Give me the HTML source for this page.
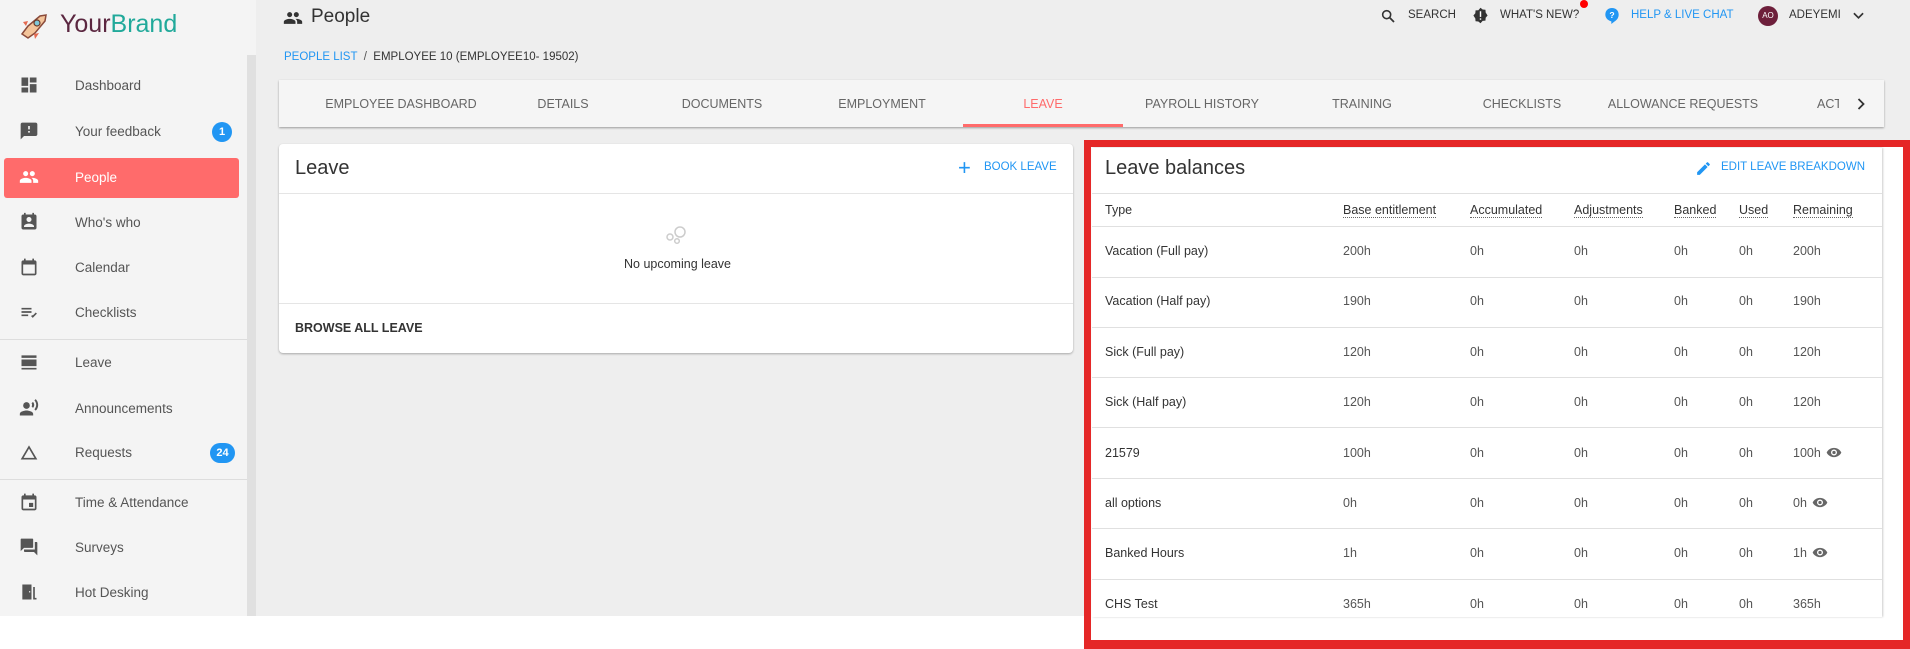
<!DOCTYPE html>
<html><head><meta charset="utf-8"><style>
*{margin:0;padding:0;box-sizing:border-box}
body{width:1910px;height:649px;background:#fff;font-family:"Liberation Sans",sans-serif;position:relative;overflow:hidden;color:#333}
.a{position:absolute;white-space:nowrap}
#side{position:absolute;left:0;top:0;width:247px;height:616px;background:#f4f4f4}
#scroll{position:absolute;left:247px;top:55px;width:9px;height:561px;background:#e0e0e0}
#scrolltop{position:absolute;left:247px;top:0;width:9px;height:55px;background:#f4f4f4}
#main{position:absolute;left:256px;top:0;width:1654px;height:616px;background:#eeeeee}
.ni{position:absolute;left:0;width:247px;height:40px}
.ni svg{position:absolute;left:19px;top:9px}
.ni span{position:absolute;left:75px;top:12px;font-size:13.5px;color:#555}
.badge{position:absolute;left:211px;top:10px;width:22px;height:20px;border-radius:10px;background:#2196f3;color:#fff;font-size:11px;font-weight:bold;text-align:center;line-height:20px}
.hr{position:absolute;left:0;width:247px;height:1px;background:#ddd}
.tab{position:absolute;top:97px;font-size:12.5px;color:#666;transform:translateX(-50%)}
.card{position:absolute;background:#fff;border-radius:4px;box-shadow:0 1px 2px rgba(0,0,0,.3)}
.th{position:absolute;top:203px;font-size:12.5px;color:#333;border-bottom:1px dotted #666;line-height:14px}
.td{position:absolute;font-size:12.5px;color:#555}
.rl{position:absolute;left:1092px;width:790px;height:1px;background:#e0e0e0}
</style></head><body>
<div id="side"></div><div id="scrolltop"></div><div id="scroll"></div><div id="main"></div>

<svg class="a" style="left:18px;top:12px" width="32" height="28" viewBox="0 0 32 28"><path d="M4 22 L10 14 L22 4 L28 3 L27 9 L17 21 L10 26Z" fill="#f3c49a" stroke="#8a4a3a" stroke-width="1.5"/><circle cx="19" cy="11" r="3" fill="#7fc8d8" stroke="#6a3a2a" stroke-width="1.2"/><path d="M5 10 L10 9 L8 14Z M16 22 L17 27 L21 21Z" fill="#e46a50"/></svg>
<div class="a" style="left:60px;top:10px;font-size:25px;color:#5b2740">Your<span style="color:#21a99a">Brand</span></div>

<div class="ni" style="top:66px"><svg width="20" height="20" viewBox="0 0 24 24"><path d="M3 13h8V3H3v10zm0 8h8v-6H3v6zm10 0h8V11h-8v10zm0-18v6h8V3h-8z" fill="#555"/></svg><span>Dashboard</span></div>
<div class="ni" style="top:112px"><svg width="20" height="20" viewBox="0 0 24 24"><path d="M20 2H4c-1.1 0-2 .9-2 2v18l4-4h14c1.1 0 2-.9 2-2V4c0-1.1-.9-2-2-2zm-7 12h-2v-2h2v2zm0-4h-2V6h2v4z" fill="#555"/></svg><span>Your feedback</span><div class="badge" style="left:212px;width:20px">1</div></div>
<div class="a" style="left:4px;top:158px;width:235px;height:40px;background:#ff6b6b;border-radius:3px"></div>
<div class="ni" style="top:158px"><svg width="20" height="20" viewBox="0 0 24 24"><path d="M16 11c1.66 0 2.99-1.34 2.99-3S17.66 5 16 5s-3 1.34-3 3 1.34 3 3 3zm-8 0c1.66 0 2.99-1.34 2.99-3S9.66 5 8 5 5 6.34 5 8s1.34 3 3 3zm0 2c-2.33 0-7 1.17-7 3.5V19h14v-2.5c0-2.330-4.67-3.5-7-3.5zm8 0c-.29 0-.62.02-.97.05 1.16.84 1.97 1.97 1.97 3.45V19h6v-2.5c0-2.33-4.67-3.5-7-3.5z" fill="#fff"/></svg><span style="color:#fff">People</span></div>
<div class="ni" style="top:203px"><svg width="20" height="20" viewBox="0 0 24 24"><path d="M19 3h-1V1h-2v2H8V1H6v2H5c-1.1 0-2 .9-2 2v14c0 1.1.9 2 2 2h14c1.1 0 2-.9 2-2V5c0-1.1-.9-2-2-2zm-7 3c1.66 0 3 1.34 3 3s-1.34 3-3 3-3-1.34-3-3 1.34-3 3-3zm6 12H6v-1c0-2 4-3.1 6-3.1s6 1.1 6 3.1v1z" fill="#555"/></svg><span>Who's who</span></div>
<div class="ni" style="top:248px"><svg width="20" height="20" viewBox="0 0 24 24"><path d="M19 4h-1V2h-2v2H8V2H6v2H5c-1.1 0-2 .9-2 2v14c0 1.1.9 2 2 2h14c1.1 0 2-.9 2-2V6c0-1.1-.9-2-2-2zm0 16H5V9h14v11z" fill="#555"/></svg><span>Calendar</span></div>
<div class="ni" style="top:293px"><svg width="20" height="20" viewBox="0 0 24 24"><path d="M3 7h12v2H3zm0 4h12v2H3zm0 4h8v2H3zm11.5 2l2 2 5-5-1.4-1.4-3.6 3.6-.6-.6z" fill="#555"/></svg><span>Checklists</span></div>
<div class="hr" style="top:339px"></div>
<div class="ni" style="top:343px"><svg width="20" height="20" viewBox="0 0 24 24"><path d="M3 4h18v3H3zm0 5h18v8H3zm0 10h18v2H3z" fill="#555"/></svg><span>Leave</span></div>
<div class="ni" style="top:389px"><svg width="20" height="20" viewBox="0 0 24 24"><circle cx="9" cy="9" r="4" fill="#555"/><path d="M9 15c-2.7 0-8 1.3-8 4v2h16v-2c0-2.7-5.3-4-8-4zm7.8-10.4l-1.7 1.7c.8 1.2.8 2.6 0 3.8l1.7 1.7c2-2 2-5 0-7.2zM20.1 1.3l-1.6 1.6c2.8 3 2.8 7.5 0 10.7l1.6 1.6c3.9-3.8 3.9-9.8 0-13.9z" fill="#555"/></svg><span>Announcements</span></div>
<div class="ni" style="top:433px"><svg width="20" height="20" viewBox="0 0 24 24"><path d="M12 4L2 21h20L12 4zm0 3.9L18.5 19h-13L12 7.9z" fill="#555"/></svg><span>Requests</span><div class="badge" style="left:210px;width:25px">24</div></div>
<div class="hr" style="top:479px"></div>
<div class="ni" style="top:483px"><svg width="20" height="20" viewBox="0 0 24 24"><path d="M19 4h-1V2h-2v2H8V2H6v2H5c-1.1 0-2 .9-2 2v14c0 1.1.9 2 2 2h14c1.1 0 2-.9 2-2V6c0-1.1-.9-2-2-2zm0 16H5V9h14v11zm-7-7h5v5h-5z" fill="#555"/></svg><span>Time &amp; Attendance</span></div>
<div class="ni" style="top:528px"><svg width="20" height="20" viewBox="0 0 24 24"><path d="M21 6h-2v9H6v2c0 .6.4 1 1 1h11l4 4V7c0-.6-.4-1-1-1zm-4 6V3c0-.6-.4-1-1-1H3c-.6 0-1 .4-1 1v14l4-4h10c.6 0 1-.4 1-1z" fill="#555"/></svg><span>Surveys</span></div>
<div class="ni" style="top:573px"><svg width="20" height="20" viewBox="0 0 24 24"><path d="M4 3h11v18H4zm13 3h2v13h2v2h-4z" fill="#555"/><rect x="12" y="11" width="1.5" height="1.5" fill="#f4f4f4"/></svg><span>Hot Desking</span></div>

<svg class="a" style="left:283px;top:8px" width="20" height="20" viewBox="0 0 24 24"><path d="M16 11c1.66 0 2.99-1.34 2.99-3S17.66 5 16 5s-3 1.34-3 3 1.34 3 3 3zm-8 0c1.66 0 2.99-1.34 2.99-3S9.66 5 8 5 5 6.34 5 8s1.34 3 3 3zm0 2c-2.33 0-7 1.17-7 3.5V19h14v-2.5c0-2.33-4.67-3.5-7-3.5zm8 0c-.29 0-.62.02-.97.05 1.16.84 1.97 1.97 1.97 3.45V19h6v-2.5c0-2.33-4.67-3.5-7-3.5z" fill="#333"/></svg>
<div class="a" style="left:311px;top:6px;font-size:19px;color:#333">People</div>
<div class="a" style="left:284px;top:51px;font-size:11.5px;color:#2196f3">PEOPLE LIST <span style="color:#555">&nbsp;/&nbsp;</span> <span style="color:#333">EMPLOYEE 10 (EMPLOYEE10- 19502)</span></div>

<svg class="a" style="left:1380px;top:8px" width="16" height="16" viewBox="0 0 24 24"><circle cx="10" cy="10" r="6" stroke="#333" stroke-width="2.4" fill="none"/><path d="M14.5 14.5L21 21" stroke="#333" stroke-width="2.6"/></svg>
<div class="a" style="left:1408px;top:9px;font-size:11.5px;color:#333">SEARCH</div>
<svg class="a" style="left:1472px;top:7px" width="17" height="17" viewBox="0 0 24 24"><path d="M12 1l3 2.5 4 .3.3 4L22 12l-2.7 3.2-.3 4-4 .3L12 23l-3-2.5-4-.3-.3-4L2 12l2.7-3.2.3-4 4-.3z" fill="#333"/><rect x="11" y="6" width="2" height="8" fill="#fff"/><rect x="11" y="16" width="2" height="2" fill="#fff"/></svg>
<div class="a" style="left:1500px;top:9px;font-size:11.5px;color:#333">WHAT'S NEW?</div>
<div class="a" style="left:1580px;top:0;width:8px;height:8px;border-radius:4px;background:#f00"></div>
<svg class="a" style="left:1604px;top:7px" width="16" height="18" viewBox="0 0 24 26"><path d="M12 1C6 1 2 5 2 11c0 5 4 9 9 10v4l5-4c4-2 6-6 6-10C22 5 18 1 12 1z" fill="#2196f3"/><text x="12" y="16" font-size="13" font-weight="bold" fill="#fff" text-anchor="middle" font-family="Liberation Sans">?</text></svg>
<div class="a" style="left:1631px;top:9px;font-size:11.5px;color:#2196f3">HELP &amp; LIVE CHAT</div>
<div class="a" style="left:1758px;top:6px;width:20px;height:20px;border-radius:10px;background:#6d1f3b;color:#fff;font-size:8px;text-align:center;line-height:20px">AO</div>
<div class="a" style="left:1789px;top:9px;font-size:11.5px;color:#333">ADEYEMI</div>
<svg class="a" style="left:1853px;top:12px" width="11" height="8" viewBox="0 0 12 8"><path d="M1 1l5 5 5-5" stroke="#333" stroke-width="1.8" fill="none"/></svg>

<div class="a" style="left:279px;top:80px;width:1605px;height:47px;background:#f5f5f5;box-shadow:0 1px 2px rgba(0,0,0,.35)"></div>
<div class="tab" style="left:401px">EMPLOYEE DASHBOARD</div>
<div class="tab" style="left:563px">DETAILS</div>
<div class="tab" style="left:722px">DOCUMENTS</div>
<div class="tab" style="left:882px">EMPLOYMENT</div>
<div class="tab" style="left:1043px;color:#ff6b6b">LEAVE</div>
<div class="a" style="left:963px;top:124px;width:160px;height:3px;background:#ff6b6b"></div>
<div class="tab" style="left:1202px">PAYROLL HISTORY</div>
<div class="tab" style="left:1362px">TRAINING</div>
<div class="tab" style="left:1522px">CHECKLISTS</div>
<div class="tab" style="left:1683px">ALLOWANCE REQUESTS</div>
<div class="a" style="left:1817px;top:97px;font-size:12.5px;color:#666;width:22px;overflow:hidden">ACTIONS</div>
<svg class="a" style="left:1857px;top:98px" width="8" height="12" viewBox="0 0 8 12"><path d="M1.5 1l5 5-5 5" stroke="#333" stroke-width="1.8" fill="none"/></svg>

<div class="card" style="left:279px;top:144px;width:794px;height:209px"></div>
<div class="a" style="left:295px;top:157px;font-size:20px;color:#333">Leave</div>
<div class="a" style="left:958px;top:160px;font-size:22px;color:#2196f3;line-height:16px">+</div>
<div class="a" style="left:984px;top:161px;font-size:11.5px;color:#2196f3">BOOK LEAVE</div>
<div class="a" style="left:279px;top:193px;width:794px;height:1px;background:#e5e5e5"></div>
<svg class="a" style="left:666px;top:226px" width="22" height="20" viewBox="0 0 22 20"><circle cx="4" cy="11" r="3" stroke="#ccc" stroke-width="1.5" fill="none"/><circle cx="14" cy="6" r="5" stroke="#ccc" stroke-width="1.5" fill="none"/><circle cx="11" cy="15" r="2.3" stroke="#ccc" stroke-width="1.5" fill="none"/></svg>
<div class="a" style="left:624px;top:257px;font-size:12.5px;color:#333">No upcoming leave</div>
<div class="a" style="left:279px;top:303px;width:794px;height:1px;background:#e5e5e5"></div>
<div class="a" style="left:295px;top:321px;font-size:12.5px;font-weight:bold;color:#333">BROWSE ALL LEAVE</div>

<div class="a" style="left:1084px;top:140px;width:826px;height:509px;border:7px solid #e52727;border-bottom-width:9px;background:#fff"></div>
<div class="card" style="left:1092px;top:148px;width:790px;height:469px;border-radius:0;box-shadow:1px 0 2px rgba(0,0,0,.2)"></div>
<div class="a" style="left:1105px;top:157px;font-size:20px;color:#333">Leave balances</div>
<svg class="a" style="left:1695px;top:160px" width="17" height="17" viewBox="0 0 24 24"><path d="M3 17.25V21h3.75L17.8 9.94l-3.75-3.75L3 17.25zM20.7 7.04a1 1 0 000-1.41l-2.34-2.34a1 1 0 00-1.41 0l-1.83 1.83 3.75 3.75 1.83-1.83z" fill="#2196f3"/></svg>
<div class="a" style="left:1721px;top:161px;font-size:11.5px;color:#2196f3">EDIT LEAVE BREAKDOWN</div>
<div class="rl" style="top:193px"></div>
<div class="a" style="left:1105px;top:203px;font-size:12.5px;color:#333">Type</div>
<div class="th" style="left:1343px">Base entitlement</div>
<div class="th" style="left:1470px">Accumulated</div>
<div class="th" style="left:1574px">Adjustments</div>
<div class="th" style="left:1674px">Banked</div>
<div class="th" style="left:1739px">Used</div>
<div class="th" style="left:1793px">Remaining</div>
<div class="rl" style="top:226px"></div>
<div class="rl" style="top:277px"></div>
<div class="rl" style="top:327px"></div>
<div class="rl" style="top:377px"></div>
<div class="rl" style="top:427px"></div>
<div class="rl" style="top:478px"></div>
<div class="rl" style="top:528px"></div>
<div class="rl" style="top:579px"></div>

<div id="rows"></div>
<script>
var d=[["Vacation (Full pay)","200h","200h",0],["Vacation (Half pay)","190h","190h",0],["Sick (Full pay)","120h","120h",0],["Sick (Half pay)","120h","120h",0],["21579","100h","100h",1],["all options","0h","0h",1],["Banked Hours","1h","1h",1],["CHS Test","365h","365h",0]];
var h="";var eye='<svg width="16" height="11" viewBox="0 0 24 16" style="vertical-align:-1px;margin-left:5px"><path d="M12 1C7 1 2.7 4.1 1 8c1.7 3.9 6 7 11 7s9.3-3.1 11-7c-1.7-3.9-6-7-11-7zm0 11.5A4.5 4.5 0 1112 3.5a4.5 4.5 0 010 9zm0-7a2.5 2.5 0 100 5 2.5 2.5 0 000-5z" fill="#666"/></svg>';
d.forEach(function(r,i){var t=244+i*50.4;
h+='<div class="td" style="left:1105px;top:'+t+'px;color:#333">'+r[0]+'</div>';
h+='<div class="td" style="left:1343px;top:'+t+'px">'+r[1]+'</div>';
[1470,1574,1674,1739].forEach(function(x){h+='<div class="td" style="left:'+x+'px;top:'+t+'px">0h</div>';});
h+='<div class="td" style="left:1793px;top:'+t+'px">'+r[2]+(r[3]?eye:'')+'</div>';});
document.getElementById("rows").innerHTML=h;
</script>
</body></html>
